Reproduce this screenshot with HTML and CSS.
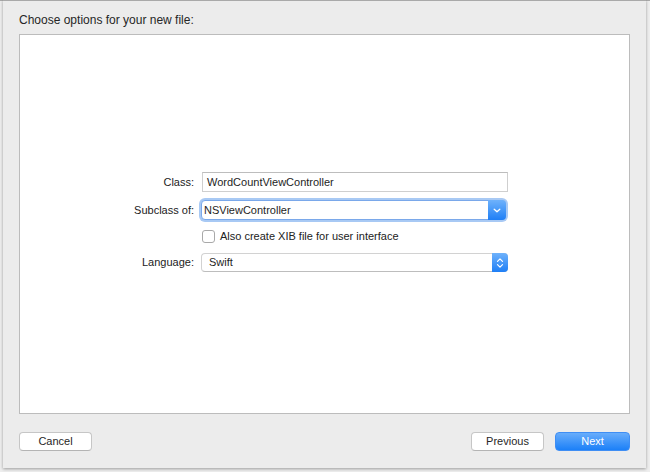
FILE: index.html
```html
<!DOCTYPE html>
<html>
<head>
<meta charset="utf-8">
<link rel="stylesheet" href="styles.css">
</head>
<body>
<div class="sheet">
  <div class="title">Choose options for your new file:</div>
  <div class="box">
    <div class="form">
      <label class="lbl">Class:</label>
      <div class="field text">WordCountViewController</div>

      <label class="lbl">Subclass of:</label>
      <div class="field popup focused">
        <span class="val">NSViewController</span>
        <span class="arrow">
          <svg width="8" height="5" viewBox="0 0 8 5"><path d="M1.2 1.2 L4 3.8 L6.8 1.2" fill="none" stroke="#fff" stroke-width="1.3" stroke-linecap="round" stroke-linejoin="round"/></svg>
        </span>
      </div>

      <span></span>
      <div class="check"><span class="cb"></span><span>Also create XIB file for user interface</span></div>

      <label class="lbl">Language:</label>
      <div class="field popup lang">
        <span class="val">Swift</span>
        <span class="arrow small">
          <svg width="8" height="12" viewBox="0 0 8 12"><path d="M1.5 4.3 L4 1.8 L6.5 4.3 M1.5 7.7 L4 10.2 L6.5 7.7" fill="none" stroke="#fff" stroke-width="1.2" stroke-linecap="round" stroke-linejoin="round"/></svg>
        </span>
      </div>
    </div>
  </div>
  <div class="footer">
    <button class="btn">Cancel</button>
    <div class="spacer"></div>
    <button class="btn">Previous</button>
    <button class="btn primary">Next</button>
  </div>
</div>
</body>
</html>
```
FILE: styles.css
```css
html, body {
  margin: 0;
  padding: 0;
}
body {
  width: 650px;
  height: 472px;
  overflow: hidden;
  background: linear-gradient(#a9a9a9, #a9a9a9) top left / 100% 1px no-repeat, #eeeeee;
  font-family: "Liberation Sans", Arial, sans-serif;
  color: #222;
}
.sheet {
  box-sizing: border-box;
  margin-left: 3px;
  width: 643px;
  height: 468px;
  border-top: 1px solid #a9a9a9;
  background: #ececec;
  padding: 11px 16px 17px;
  display: flex;
  flex-direction: column;
  box-shadow: 0 1px 3px rgba(0,0,0,0.35);
}
.title {
  font-size: 12px;
  line-height: 16px;
  height: 16px;
  margin-bottom: 6px;
  color: #262626;
}
.box {
  box-sizing: border-box;
  height: 380px;
  background: #fff;
  border: 1px solid #bcbcbc;
  padding: 137px 0 0 108px;
}
.form {
  display: grid;
  grid-template-columns: 66px 307px;
  grid-template-rows: 20px 20px 16px 20px;
  column-gap: 7px;
  row-gap: 8px;
  font-size: 11px;
}
.lbl {
  text-align: right;
  line-height: 20px;
  color: #222;
}
.field {
  box-sizing: border-box;
  height: 20px;
  line-height: 18px;
  background: #fff;
  color: #1e1e1e;
  white-space: nowrap;
}
.text {
  border: 1px solid #cfcfcf;
  border-top-color: #bdbdbd;
  padding-left: 4px;
  margin-left: 1px;
}
.popup {
  display: flex;
  align-items: stretch;
  border-radius: 4px;
}
.popup .val {
  flex: 1;
}
.focused {
  width: 305px;
  border: 1px solid #7aa8ea;
  box-shadow: 0 0 0 2px #a8c9f4;
  padding-left: 2px;
}
.lang {
  border: 1px solid #d2d2d2;
  border-bottom-color: #bdbdbd;
  padding-left: 7px;
  height: 19px;
  line-height: 17px;
  margin-top: 1px;
}
.arrow {
  width: 18px;
  margin: -1px -1px -1px 0;
  border-radius: 0 4px 4px 0;
  background: linear-gradient(#6fb2fb, #1f7ff6);
  display: flex;
  align-items: center;
  justify-content: center;
}
.arrow.small {
  width: 16px;
}
.check {
  display: flex;
  align-items: center;
  gap: 5px;
  padding-left: 1px;
  line-height: 16px;
  color: #222;
}
.cb {
  box-sizing: border-box;
  width: 13px;
  height: 13px;
  border: 1px solid #a9a9a9;
  border-radius: 3px;
  background: #fff;
}
.footer {
  margin-top: 18px;
  display: flex;
  gap: 11px;
}
.spacer {
  flex: 1;
}
.btn {
  box-sizing: border-box;
  height: 19px;
  width: 73px;
  padding: 0;
  font-family: "Liberation Sans", Arial, sans-serif;
  font-size: 11px;
  line-height: 17px;
  color: #262626;
  background: #fff;
  border: 1px solid #c6c6c6;
  border-bottom-color: #b4b4b4;
  border-radius: 4px;
}
.btn.primary {
  width: 75px;
  color: #fff;
  border: 1px solid #3f8ef4;
  background: linear-gradient(#68adfb, #1c80f8);
}
```
